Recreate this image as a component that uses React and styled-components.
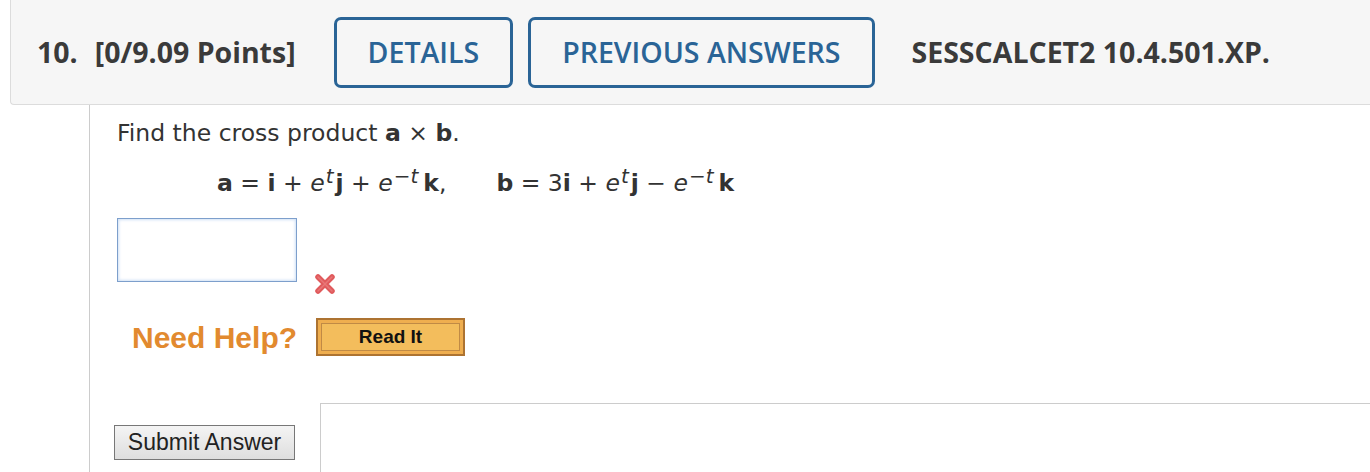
import React from 'react';
import styled, {createGlobalStyle} from 'styled-components';

const GlobalStyle = createGlobalStyle`
  html, body {
    margin: 0;
    padding: 0;
    background: #fff;
    overflow: hidden;
  }
`

const Page = styled.div`
  width: 1370px;
  height: 472px;
  overflow: hidden;
`

const Header = styled.div`
  display: flex;
  align-items: center;
  height: 104px;
  margin-left: 10px;
  padding-left: 26px;
  background: #f6f6f6;
  border-left: 1px solid #dcdcdc;
  border-bottom: 1px solid #dcdcdc;
  border-bottom-left-radius: 4px;
  font-family: "Open Sans", "DejaVu Sans", sans-serif;
  color: #3a3a3a;
`

const HeadText = styled.span`
  font-size: 28.5px;
  font-weight: 700;
  white-space: nowrap;
  margin-right: ${props => props.gap || 0}px;
`

const OutlineButton = styled.button`
  height: 71px;
  padding: 0 31px;
  margin-right: ${props => props.gap || 0}px;
  border: 3px solid #2a6496;
  border-radius: 7px;
  background: transparent;
  color: #2a6496;
  font-family: "Open Sans", sans-serif;
  font-size: 28.5px;
  font-weight: 600;
  white-space: nowrap;
`

const Content = styled.div`
  margin-left: 89px;
  border-left: 1px solid #cccccc;
  padding: 14px 0 0 27px;
  font-family: "DejaVu Sans", Verdana, sans-serif;
  font-size: 23.5px;
  line-height: 29px;
  color: #333;
`

const Prompt = styled.div`
  white-space: nowrap;
`

const MathLine = styled.div`
  margin: 21px 0 0 100px;
  white-space: nowrap;

  b { font-weight: 700; }
  i { font-style: italic; }
`

const Sup = styled.sup`
  font-size: 0.85em;
  line-height: 0;
  vertical-align: 0.42em;
  margin: 0 ${props => props.after ? 5 : 2}px 0 1px;
`

const MathGap = styled.span`
  display: inline-block;
  width: 50px;
`

const AnswerRow = styled.div`
  display: flex;
  align-items: flex-start;
  margin-top: 20px;
`

const AnswerInput = styled.div`
  width: 178px;
  height: 62px;
  border: 1px solid #7d9fcc;
  box-shadow: inset 0 0 3px 1px #cfe0f5;
  background: #fff;
`

const WrongMark = styled.svg`
  width: 24px;
  height: 24px;
  margin: 54px 0 0 16px;
`

const HelpRow = styled.div`
  display: flex;
  align-items: center;
  margin: 22px 0 0 15px;
`

const HelpLabel = styled.span`
  font-family: "Liberation Sans", Arial, sans-serif;
  font-size: 30px;
  font-weight: 700;
  color: #e28a2f;
  margin-right: 19px;
  white-space: nowrap;
`

const ReadItButton = styled.button`
  width: 149px;
  height: 38px;
  padding: 3px;
  border: 2px solid #ad7331;
  background: #efae4f;
  box-sizing: border-box;
  font-family: "Liberation Sans", Arial, sans-serif;
  font-size: 19px;
  font-weight: 700;
  color: #111;
`

const ReadItFace = styled.span`
  display: flex;
  align-items: center;
  justify-content: center;
  height: 100%;
  border: 1px solid #c08a45;
  background: #f3bd5c;
  box-sizing: border-box;
`

const BottomRow = styled.div`
  display: flex;
  margin-top: 47px;
`

const SubmitButton = styled.button`
  width: 181px;
  height: 35px;
  margin: 22px 0 0 -3px;
  padding: 0;
  border: 1px solid #777;
  background: linear-gradient(#f4f4f4, #dedede);
  font-family: "Liberation Sans", Arial, sans-serif;
  font-size: 23px;
  color: #222;
  white-space: nowrap;
`

const FeedbackBox = styled.div`
  flex: 1;
  height: 80px;
  margin-left: 25px;
  border-top: 1px solid #cccccc;
  border-left: 1px solid #cccccc;
`

export default function App() {
  return (
    <Page>
      <GlobalStyle/>
      <Header>
        <HeadText gap={17}>10.</HeadText>
        <HeadText gap={38}>[0/9.09 Points]</HeadText>
        <OutlineButton gap={15}>DETAILS</OutlineButton>
        <OutlineButton gap={37}>PREVIOUS ANSWERS</OutlineButton>
        <HeadText>SESSCALCET2 10.4.501.XP.</HeadText>
      </Header>
      <Content>
        <Prompt>Find the cross product <b>a</b> × <b>b</b>.</Prompt>
        <MathLine>
          <b>a</b> = <b>i</b> + <i>e</i><Sup><i>t</i></Sup><b>j</b> + <i>e</i><Sup after>−<i>t</i></Sup><b>k</b>,
          <MathGap/>
          <b>b</b> = 3<b>i</b> + <i>e</i><Sup><i>t</i></Sup><b>j</b> − <i>e</i><Sup after>−<i>t</i></Sup><b>k</b>
        </MathLine>
        <AnswerRow>
          <AnswerInput/>
          <WrongMark viewBox="0 0 24 24">
            <path d="M5 5 L19 19 M19 5 L5 19" stroke="#e05a5c" strokeWidth="5.5" strokeLinecap="round"/>
            <path d="M5 5 L19 19 M19 5 L5 19" stroke="#ee8a8a" strokeWidth="1.5" strokeLinecap="round" opacity="0.6"/>
          </WrongMark>
        </AnswerRow>
        <HelpRow>
          <HelpLabel>Need Help?</HelpLabel>
          <ReadItButton><ReadItFace>Read It</ReadItFace></ReadItButton>
        </HelpRow>
        <BottomRow>
          <SubmitButton>Submit Answer</SubmitButton>
          <FeedbackBox/>
        </BottomRow>
      </Content>
    </Page>
  );
}
